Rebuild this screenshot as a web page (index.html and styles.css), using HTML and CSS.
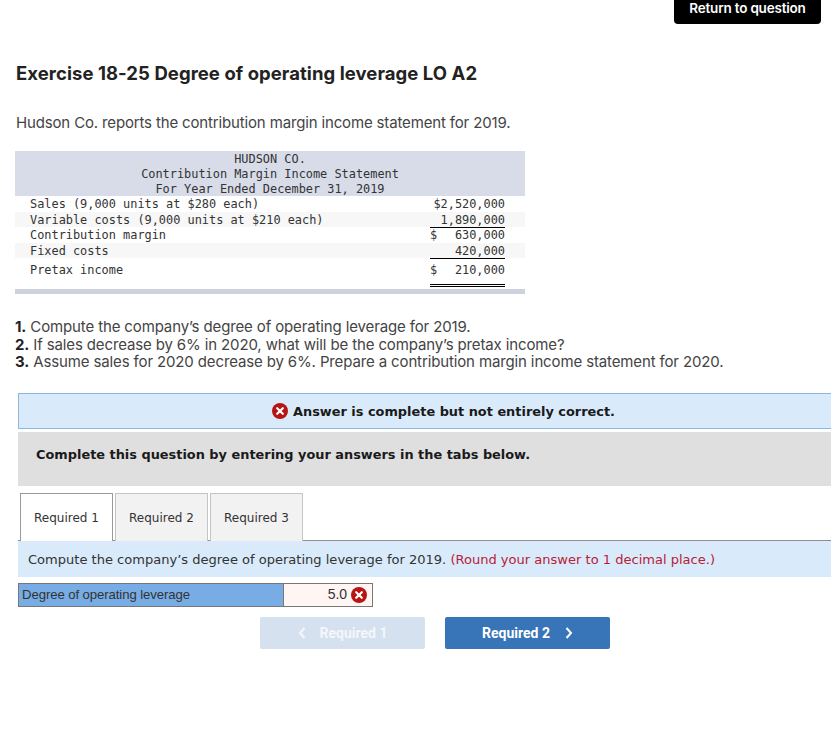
FILE: index.html
```html
<!DOCTYPE html>
<html lang="en">
<head>
<meta charset="utf-8">
<title>Exercise 18-25</title>
<link rel="stylesheet" href="styles.css">
</head>
<body>
<div class="topbar"><a class="return">Return to question</a></div>
<h1>Exercise 18-25 Degree of operating leverage LO A2</h1>
<p class="intro">Hudson Co. reports the contribution margin income statement for 2019.</p>
<div class="statement">
  <div class="st-head">
    <div>HUDSON CO.</div>
    <div>Contribution Margin Income Statement</div>
    <div>For Year Ended December 31, 2019</div>
  </div>
  <div class="st-row"><span>Sales (9,000 units at $280 each)</span><span class="amt">$2,520,000</span></div>
  <div class="st-row alt"><span>Variable costs (9,000 units at $210 each)</span><span class="amt under">1,890,000</span></div>
  <div class="st-row"><span>Contribution margin</span><span class="amt"><i>$</i>630,000</span></div>
  <div class="st-row alt"><span>Fixed costs</span><span class="amt under">420,000</span></div>
  <div class="st-row last"><span>Pretax income</span><span class="amt double"><i>$</i>210,000</span></div>
  <div class="st-foot"></div>
</div>
<ol class="questions">
  <li><b>1.</b> Compute the company’s degree of operating leverage for 2019.</li>
  <li><b>2.</b> If sales decrease by 6% in 2020, what will be the company’s pretax income?</li>
  <li><b>3.</b> Assume sales for 2020 decrease by 6%. Prepare a contribution margin income statement for 2020.</li>
</ol>
<main class="panel">
  <div class="banner">
    <svg class="x-icon" viewBox="0 0 16 16"><circle cx="8" cy="8" r="8"/><path d="M5.2 5.2l5.6 5.6M10.8 5.2l-5.6 5.6"/></svg>
    <span>Answer is complete but not entirely correct.</span>
  </div>
  <div class="notice">Complete this question by entering your answers in the tabs below.</div>
  <div class="tabs">
    <div class="tab active">Required 1</div>
    <div class="tab">Required 2</div>
    <div class="tab">Required 3</div>
  </div>
  <div class="instruction">Compute the company’s degree of operating leverage for 2019. <span class="red">(Round your answer to 1 decimal place.)</span></div>
  <div class="answer">
    <div class="answer-label">Degree of operating leverage</div>
    <div class="answer-value">5.0<svg class="x-icon" viewBox="0 0 16 16"><circle cx="8" cy="8" r="8"/><path d="M5.2 5.2l5.6 5.6M10.8 5.2l-5.6 5.6"/></svg></div>
  </div>
  <div class="nav">
    <a class="btn disabled"><svg class="chev" viewBox="0 0 8 12"><path d="M6.5 1L2 6l4.5 5"/></svg>Required 1</a>
    <a class="btn primary">Required 2<svg class="chev" viewBox="0 0 8 12"><path d="M1.5 1L6 6l-4.5 5"/></svg></a>
  </div>
</main>
</body>
</html>
```
FILE: styles.css
```css
* { box-sizing: border-box; }
html, body { margin: 0; padding: 0; }
body {
  width: 837px;
  height: 751px;
  overflow: hidden;
  background: #fff;
  color: #333;
  font-family: "Inter", "Liberation Sans", sans-serif;
}
.topbar {
  display: flex;
  justify-content: flex-end;
  padding-right: 16px;
  height: 24px;
}
.return {
  width: 147px;
  height: 24px;
  background: #000;
  color: #fff;
  border-radius: 0 0 4px 4px;
  font-size: 13.5px;
  font-weight: 600;
  letter-spacing: -0.2px;
  line-height: 16px;
  text-align: center;
}
h1 {
  margin: 37px 0 0 16px;
  color: #222;
  font-size: 18.5px;
  font-weight: 700;
  letter-spacing: 0.06px;
  line-height: 24px;
}
.intro {
  margin: 28px 0 0 16px;
  color: #444;
  font-size: 15px;
  line-height: 20px;
  letter-spacing: -0.15px;
}
.statement {
  width: 510px;
  margin: 18px 0 0 15px;
  font-family: "DejaVu Sans Mono", "Liberation Mono", monospace;
  font-size: 11.9px;
  line-height: 15px;
  color: #333;
}
.st-head {
  height: 45px;
  padding-top: 1px;
  background: #d7dce8;
  text-align: center;
}
.st-row {
  display: flex;
  justify-content: space-between;
  height: 15.6px;
  padding: 1px 20px 0 15px;
}
.st-row.alt { background: #f7f7f7; }
.st-row.last { height: 29px; padding-top: 5px; }
.amt {
  display: flex;
  justify-content: flex-end;
  width: 75px;
  height: 15.6px;
}
.amt i { font-style: normal; margin-right: auto; }
.amt.under { border-bottom: 1px solid #000; }
.st-row.last .amt { height: 24px; border-bottom: 3px double #000; }
.st-foot { height: 5px; margin-top: 2px; background: #ccd3df; }
.questions {
  list-style: none;
  margin: 24px 0 0 15px;
  padding: 0;
  color: #444;
  font-size: 15px;
  line-height: 17.5px;
  letter-spacing: -0.13px;
}
.questions b { color: #222; }
.panel {
  width: 813px;
  margin: 22px 0 0 18px;
  font-family: "DejaVu Sans", Verdana, sans-serif;
}
.banner {
  display: flex;
  align-items: center;
  justify-content: center;
  gap: 5px;
  height: 36px;
  padding: 1px 0 0 37px;
  background: #d9ebfa;
  border: 1px solid #8ab8e0;
  border-right: 0;
  color: #1a1a1a;
  font-size: 12.9px;
  font-weight: 700;
}
.x-icon { width: 16px; height: 16px; flex: none; }
.x-icon circle { fill: #b81414; }
.x-icon path { stroke: #fff; stroke-width: 2.2; stroke-linecap: round; fill: none; }
.notice {
  height: 54px;
  margin-top: 3px;
  padding: 14px 0 0 18px;
  background: #dfdfdf;
  color: #1a1a1a;
  font-size: 12.9px;
  font-weight: 700;
  line-height: 18px;
}
.tabs {
  display: flex;
  gap: 2px;
  height: 55px;
  padding: 7px 0 0 2px;
  border-bottom: 1px solid #8f8f8f;
}
.tab {
  width: 93px;
  height: 48px;
  background: #f2f2f2;
  border: 1px solid #c4c4c4;
  border-bottom: 0;
  color: #333;
  font-size: 12px;
  line-height: 49px;
  text-align: center;
}
.tab.active {
  background: #fff;
  border: 1px solid #9a9a9a;
  border-bottom: 0;
}
.instruction {
  height: 36px;
  padding-left: 10px;
  background: #d9ebfa;
  color: #333;
  font-size: 13.04px;
  line-height: 37px;
}
.red { color: #b92035; }
.answer {
  display: flex;
  width: 355px;
  height: 24px;
  margin-top: 6px;
  border: 1px solid #777;
  font-family: "Liberation Sans", Arial, sans-serif;
  font-size: 13.2px;
  letter-spacing: -0.1px;
  line-height: 21px;
  color: #333;
}
.answer-label {
  width: 265px;
  padding-left: 3px;
  background: #78ace4;
  border-right: 1px solid #777;
}
.answer-value {
  display: flex;
  align-items: center;
  justify-content: flex-end;
  gap: 4px;
  flex: 1;
  padding-right: 5px;
  background: #fff5f2;
  font-size: 14px;
}
.nav {
  display: flex;
  gap: 20px;
  margin: 10px 0 0 242px;
}
.btn {
  display: flex;
  align-items: center;
  justify-content: center;
  gap: 15px;
  width: 165px;
  height: 32px;
  border-radius: 2px;
  color: #fff;
  font-family: "Roboto", "Liberation Sans", sans-serif;
  font-size: 14px;
  font-weight: 700;
}
.btn.primary { background: #3874b8; }
.btn.disabled { background: #d5e1ef; color: #f4f7fb; gap: 14px; }
.chev { width: 8px; height: 12px; }
.chev path { fill: none; stroke: currentColor; stroke-width: 2; }
```
